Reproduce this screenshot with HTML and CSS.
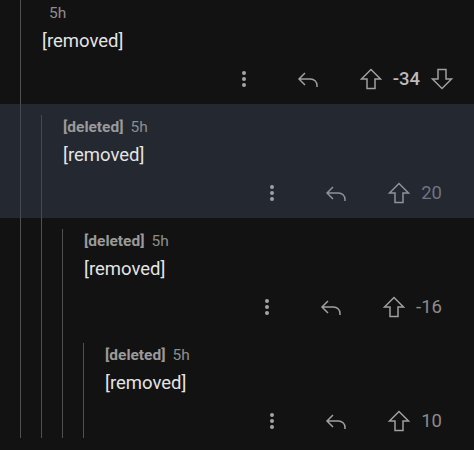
FILE: index.html
```html
<!DOCTYPE html>
<html>
<head>
<meta charset="utf-8">
<link rel="stylesheet" href="styles.css">
</head>
<body>
<div class="thread">

  <div class="comment first">
    <div class="gutter"><span class="line own"></span></div>
    <div class="content">
      <div class="meta"><span class="author"></span><span class="time">5h</span></div>
      <div class="body">[removed]</div>
      <div class="actions with-down">
        <span class="icon dots"><svg viewBox="0 0 24 24"><circle cx="12" cy="6" r="2"/><circle cx="12" cy="12" r="2"/><circle cx="12" cy="18" r="2"/></svg></span>
        <span class="icon reply"><svg viewBox="0 0 24 24"><path d="M9 6 L3 12 L9 18 M3 12 H14.5 C18 12 21 14.5 21 18.5 V20"/></svg></span>
        <span class="icon vote"><svg viewBox="0 0 24 24"><path d="M12 2.5 L2.5 12 H8 V21.5 H16 V12 H21.5 Z"/></svg></span>
        <span class="score bright">-34</span>
        <span class="icon vote down"><svg viewBox="0 0 24 24"><path d="M12 21.5 L2.5 12 H8 V2.5 H16 V12 H21.5 Z"/></svg></span>
      </div>
    </div>
  </div>

  <div class="comment highlight">
    <div class="gutter"><span class="line"></span><span class="line own"></span></div>
    <div class="content">
      <div class="meta"><span class="author">[deleted]</span><span class="time">5h</span></div>
      <div class="body">[removed]</div>
      <div class="actions">
        <span class="icon dots"><svg viewBox="0 0 24 24"><circle cx="12" cy="6" r="2"/><circle cx="12" cy="12" r="2"/><circle cx="12" cy="18" r="2"/></svg></span>
        <span class="icon reply"><svg viewBox="0 0 24 24"><path d="M9 6 L3 12 L9 18 M3 12 H14.5 C18 12 21 14.5 21 18.5 V20"/></svg></span>
        <span class="icon vote"><svg viewBox="0 0 24 24"><path d="M12 2.5 L2.5 12 H8 V21.5 H16 V12 H21.5 Z"/></svg></span>
        <span class="score">20</span>
      </div>
    </div>
  </div>

  <div class="comment">
    <div class="gutter"><span class="line"></span><span class="line"></span><span class="line own"></span></div>
    <div class="content">
      <div class="meta"><span class="author">[deleted]</span><span class="time">5h</span></div>
      <div class="body">[removed]</div>
      <div class="actions">
        <span class="icon dots"><svg viewBox="0 0 24 24"><circle cx="12" cy="6" r="2"/><circle cx="12" cy="12" r="2"/><circle cx="12" cy="18" r="2"/></svg></span>
        <span class="icon reply"><svg viewBox="0 0 24 24"><path d="M9 6 L3 12 L9 18 M3 12 H14.5 C18 12 21 14.5 21 18.5 V20"/></svg></span>
        <span class="icon vote"><svg viewBox="0 0 24 24"><path d="M12 2.5 L2.5 12 H8 V21.5 H16 V12 H21.5 Z"/></svg></span>
        <span class="score">-16</span>
      </div>
    </div>
  </div>

  <div class="comment last">
    <div class="gutter"><span class="line"></span><span class="line"></span><span class="line"></span><span class="line own"></span></div>
    <div class="content">
      <div class="meta"><span class="author">[deleted]</span><span class="time">5h</span></div>
      <div class="body">[removed]</div>
      <div class="actions">
        <span class="icon dots"><svg viewBox="0 0 24 24"><circle cx="12" cy="6" r="2"/><circle cx="12" cy="12" r="2"/><circle cx="12" cy="18" r="2"/></svg></span>
        <span class="icon reply"><svg viewBox="0 0 24 24"><path d="M9 6 L3 12 L9 18 M3 12 H14.5 C18 12 21 14.5 21 18.5 V20"/></svg></span>
        <span class="icon vote"><svg viewBox="0 0 24 24"><path d="M12 2.5 L2.5 12 H8 V21.5 H16 V12 H21.5 Z"/></svg></span>
        <span class="score">10</span>
      </div>
    </div>
  </div>

</div>
</body>
</html>
```

FILE: styles.css
```css
html, body {
  margin: 0;
  padding: 0;
  background: #121212;
  height: 100%;
  overflow: hidden;
}

body {
  font-family: Roboto, "Noto Sans", "Liberation Sans", sans-serif;
  color: #e2e2e2;
}

.thread {
  display: flex;
  flex-direction: column;
}

.comment {
  display: flex;
  height: 114px;
}

.comment.first {
  margin-top: -10px;
}

.comment.last {
  height: 118px;
}

.comment.highlight {
  background: #232831;
}

.gutter {
  display: flex;
  gap: 20px;
  padding-left: 20px;
  padding-right: 21px;
  flex: none;
}

.line {
  width: 1px;
  background: #505050;
}

.highlight .line {
  background: #444a55;
}

.line.own {
  margin-top: 11px;
}

.comment.first .line.own {
  margin-top: 0;
}

.comment.last .line {
  margin-bottom: 12px;
}

.content {
  flex: 1;
  display: flex;
  flex-direction: column;
  padding-top: 14px;
  min-width: 0;
}

.meta {
  display: flex;
  gap: 7px;
  font-size: 15.5px;
  line-height: 18px;
  height: 18px;
}

.author {
  font-weight: 700;
  color: #9a9a9a;
}

.time {
  color: #8e8e8e;
}

.body {
  margin-top: 6px;
  font-size: 18.5px;
  line-height: 26px;
  color: #e4e4e4;
}

.actions {
  margin-top: 9px;
  height: 32px;
  display: flex;
  align-items: center;
  justify-content: flex-end;
  padding-right: 32px;
}

.actions.with-down {
  padding-right: 20px;
}

.icon {
  width: 24px;
  height: 24px;
  display: flex;
  flex: none;
}

.icon svg {
  width: 24px;
  height: 24px;
}

.dots svg {
  fill: #a4a4a4;
}

.highlight .dots svg {
  fill: #9aa0a8;
}

.reply svg, .vote svg {
  fill: none;
  stroke: #a0a0a0;
  stroke-width: 1.5;
  stroke-linejoin: miter;
  stroke-linecap: butt;
}

.highlight .reply svg, .highlight .vote svg {
  stroke: #8d939c;
}

.reply {
  margin-left: 40px;
}

.vote {
  margin-left: 39px;
}

.vote.down {
  margin-left: 10px;
}

.score {
  margin-left: 10px;
  font-size: 18.5px;
  font-weight: 400;
  color: #8c8c8c;
  line-height: 24px;
}

.score.bright {
  color: #bcbcbc;
  font-weight: 500;
}

.highlight .score {
  color: #6f7580;
}
```
